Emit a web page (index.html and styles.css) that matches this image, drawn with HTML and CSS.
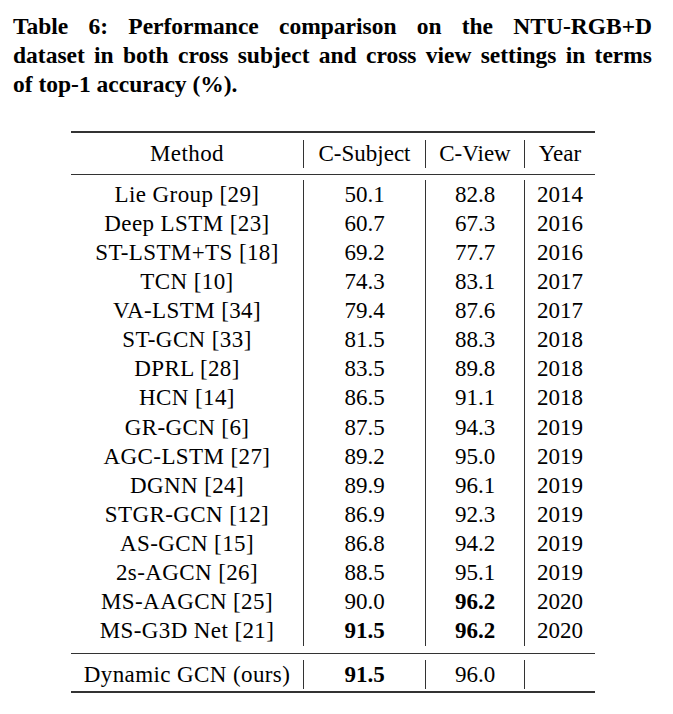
FILE: index.html
```html
<!DOCTYPE html>
<html lang="en">
<head>
<meta charset="utf-8">
<title>Table 6</title>
<link rel="stylesheet" href="styles.css">
</head>
<body>
<div class="page">
  <p class="caption">
    <span class="cap-line">Table 6: Performance comparison on the NTU-RGB+D</span>
    <span class="cap-line">dataset in both cross subject and cross view settings in terms</span>
    <span class="cap-last">of top-1 accuracy (%).</span>
  </p>

  <div class="tbl">
    <div class="sec sec-head">
      <div class="c m">Method</div><div class="c v">C-Subject</div><div class="c v">C-View</div><div class="c v">Year</div>
    </div>
    <div class="sec sec-body">
      <div class="c m">Lie Group [29]</div><div class="c v">50.1</div><div class="c v">82.8</div><div class="c v">2014</div>
      <div class="c m">Deep LSTM [23]</div><div class="c v">60.7</div><div class="c v">67.3</div><div class="c v">2016</div>
      <div class="c m">ST-LSTM+TS [18]</div><div class="c v">69.2</div><div class="c v">77.7</div><div class="c v">2016</div>
      <div class="c m">TCN [10]</div><div class="c v">74.3</div><div class="c v">83.1</div><div class="c v">2017</div>
      <div class="c m">VA-LSTM [34]</div><div class="c v">79.4</div><div class="c v">87.6</div><div class="c v">2017</div>
      <div class="c m">ST-GCN [33]</div><div class="c v">81.5</div><div class="c v">88.3</div><div class="c v">2018</div>
      <div class="c m">DPRL [28]</div><div class="c v">83.5</div><div class="c v">89.8</div><div class="c v">2018</div>
      <div class="c m">HCN [14]</div><div class="c v">86.5</div><div class="c v">91.1</div><div class="c v">2018</div>
      <div class="c m">GR-GCN [6]</div><div class="c v">87.5</div><div class="c v">94.3</div><div class="c v">2019</div>
      <div class="c m">AGC-LSTM [27]</div><div class="c v">89.2</div><div class="c v">95.0</div><div class="c v">2019</div>
      <div class="c m">DGNN [24]</div><div class="c v">89.9</div><div class="c v">96.1</div><div class="c v">2019</div>
      <div class="c m">STGR-GCN [12]</div><div class="c v">86.9</div><div class="c v">92.3</div><div class="c v">2019</div>
      <div class="c m">AS-GCN [15]</div><div class="c v">86.8</div><div class="c v">94.2</div><div class="c v">2019</div>
      <div class="c m">2s-AGCN [26]</div><div class="c v">88.5</div><div class="c v">95.1</div><div class="c v">2019</div>
      <div class="c m">MS-AAGCN [25]</div><div class="c v">90.0</div><div class="c v b">96.2</div><div class="c v">2020</div>
      <div class="c m">MS-G3D Net [21]</div><div class="c v b">91.5</div><div class="c v b">96.2</div><div class="c v">2020</div>
    </div>
    <div class="sec sec-foot">
      <div class="c m">Dynamic GCN (ours)</div><div class="c v b">91.5</div><div class="c v">96.0</div><div class="c v"></div>
    </div>
  </div>
</div>
</body>
</html>
```

FILE: styles.css
```css
html, body {
  margin: 0;
  padding: 0;
  background: #ffffff;
}

.page {
  width: 673px;
  height: 714px;
  font-family: "Liberation Serif", "Times New Roman", serif;
  color: #000;
}

.caption {
  margin: 0;
  padding: 12px 21px 0 13px;
  font-size: 23.5px;
  font-weight: bold;
  line-height: 29px;
}

.cap-line {
  display: block;
  white-space: nowrap;
  text-align: justify;
  text-align-last: justify;
}

.cap-last {
  display: block;
  white-space: nowrap;
}

.tbl {
  margin: 32px 0 0 71px;
  width: 524px;
  font-size: 23px;
}

.sec {
  display: grid;
  grid-template-columns: 232px 122px 99px 71px;
}

.sec-head {
  border-top: 2px solid #333;
  border-bottom: 1px solid #333;
  padding: 7px 0 6px;
  grid-auto-rows: 28px;
}

.sec-body {
  border-bottom: 1px solid #333;
  padding: 5px 0 7px;
  grid-auto-rows: 29.125px;
}

.sec-foot {
  border-bottom: 2px solid #333;
  padding: 6px 0 2px;
  grid-auto-rows: 29px;
}

.c {
  display: flex;
  align-items: center;
  justify-content: center;
  white-space: nowrap;
}

.m {
  letter-spacing: 0.4px;
}

.v {
  border-left: 1px solid #333;
}

.b {
  font-weight: bold;
}
```
